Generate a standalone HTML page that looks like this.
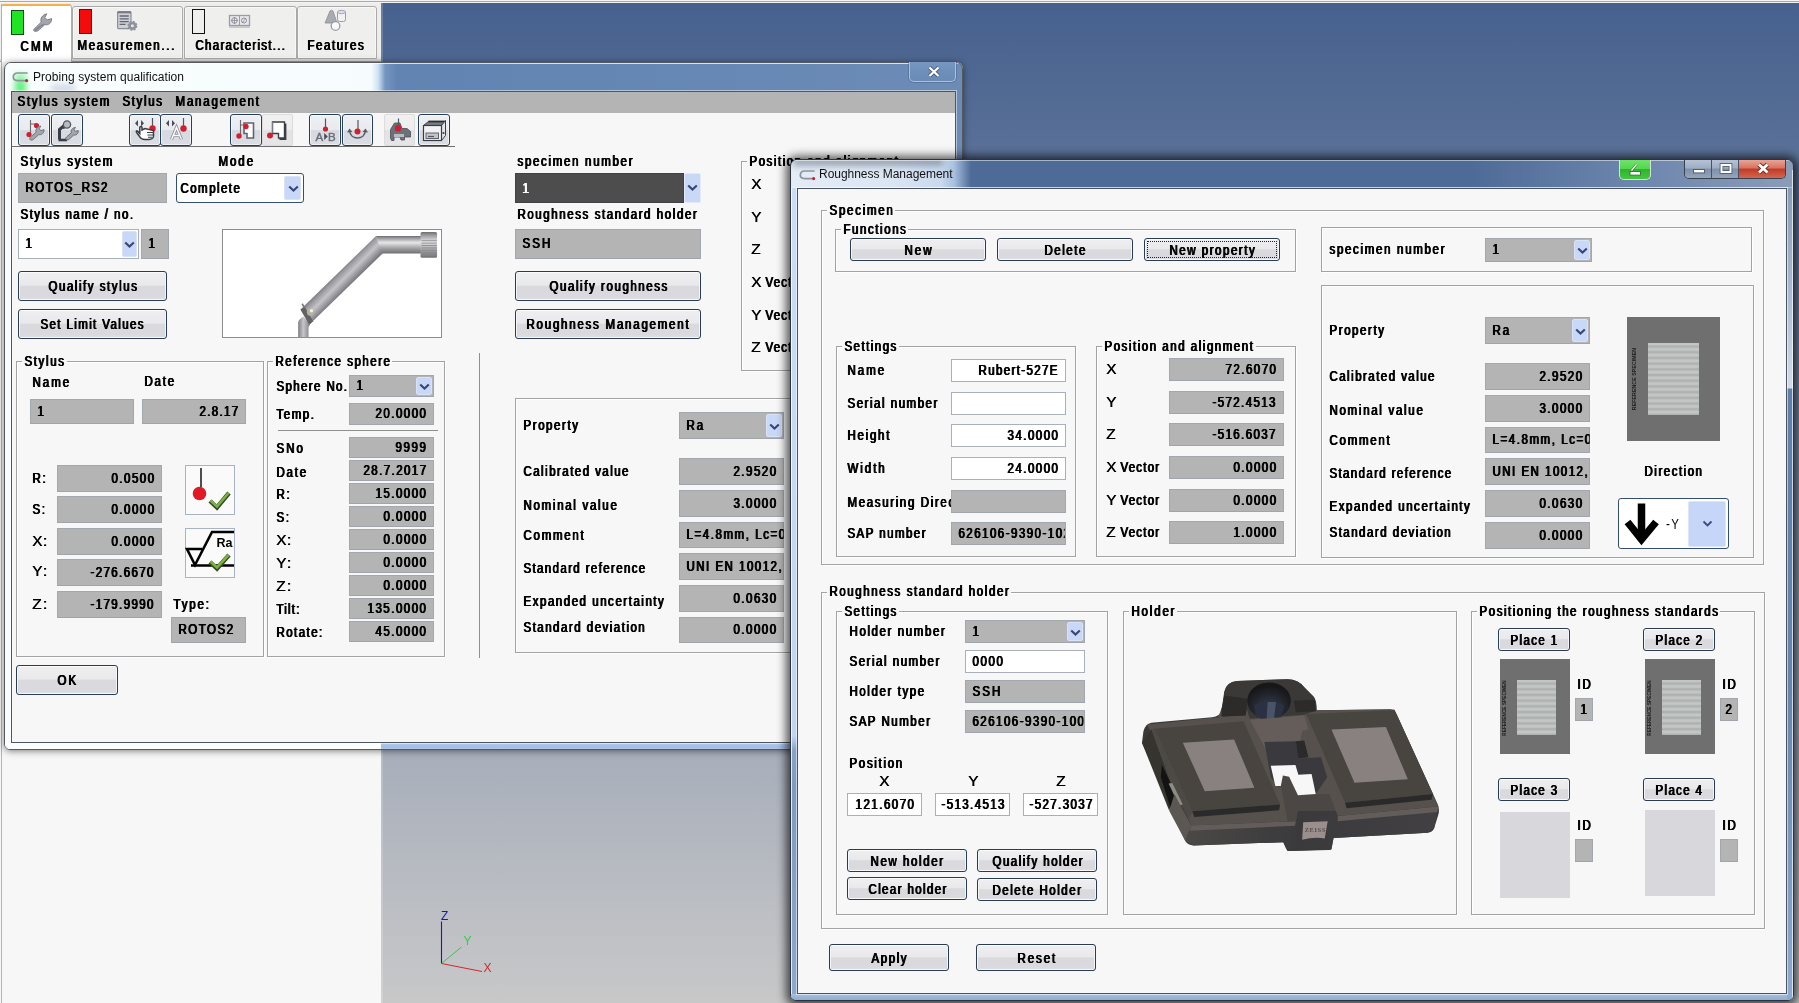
<!DOCTYPE html>
<html><head><meta charset="utf-8"><title>Roughness Management</title>
<style>
html,body{margin:0;padding:0}
body{width:1799px;height:1003px;overflow:hidden;position:relative;background:#f7f7f7;font:13px "Liberation Sans",sans-serif;color:#000}
div,svg{position:absolute;box-sizing:border-box}
#root{left:0;top:0;width:1799px;height:1003px;will-change:transform}
.t{font:14px/15px "Liberation Sans",sans-serif;white-space:nowrap;text-shadow:1.2px 0 0 #000,.6px 0 0 #000;color:#000;transform:scaleX(.82);transform-origin:0 0}
.tw{transform:scaleX(1.1);text-shadow:.4px 0 0 #000;letter-spacing:0}
.s{font:12px/15px "Liberation Sans",sans-serif;white-space:nowrap;color:#111}
.f{background:#b4b4b4;border:1px solid #a3a8af;border-bottom-color:#a0a5ac}
.w{background:#fff;border:1px solid #a9b0b8}
.d{background:#4d4d4d;border:1px solid #3f4246}
.cw{background:#fff;border:1px solid #34506f;border-radius:3px}
.dd{background:#c9d8f7;border:1px solid #d9e3f8;border-radius:2px}
.b{border:1px solid #293c52;border-radius:3px;background:linear-gradient(#efeff2 0,#e9e9ec 47%,#dadade 51%,#d9d9de 85%,#dddde2 100%);box-shadow:inset 0 0 0 1px rgba(255,255,255,.8),inset 2px 0 1px -1px rgba(170,200,235,.6),inset -2px 0 1px -1px rgba(170,200,235,.6)}
.fr{border:1px dotted #222}
.g{border:1px solid #a3a3a3;box-shadow:inset 1px 1px 0 #fff, 1px 1px 0 #fff}
.gl{background:#f7f7f7}
.cl{background:#f7f7f7}
</style></head>
<body>
<div id="root">
<div class="" style="left:0px;top:0px;width:1799px;height:3px;background:#f4f4f4"></div>
<div class="" style="left:0px;top:1px;width:1799px;height:1px;background:#a9a9a9"></div>
<div class="" style="left:381px;top:3px;width:1418px;height:1000px;background:linear-gradient(#46618e,#c8c8c9)"></div>
<div class="" style="left:381px;top:3px;width:2px;height:1000px;background:rgba(255,255,255,.18)"></div>
<div class="" style="left:0px;top:3px;width:381px;height:59px;background:#ededeb"></div>
<div class="" style="left:0px;top:59px;width:381px;height:3px;background:#d9d9d9;border-bottom:1px solid #9c9c9c"></div>
<div class="" style="left:1px;top:4px;width:1px;height:999px;background:#b4b4b4"></div>
<div class="" style="left:72px;top:6px;width:111px;height:53px;background:#efefed;border:1px solid #a9a9a9;border-radius:3px 3px 0 0;box-shadow:inset 0 0 0 1px #f8f8f8"></div>
<div class="" style="left:184px;top:6px;width:113px;height:53px;background:#efefed;border:1px solid #a9a9a9;border-radius:3px 3px 0 0;box-shadow:inset 0 0 0 1px #f8f8f8"></div>
<div class="" style="left:297px;top:6px;width:80px;height:53px;background:#efefed;border:1px solid #a9a9a9;border-radius:3px 3px 0 0;box-shadow:inset 0 0 0 1px #f8f8f8"></div>
<div class="" style="left:1px;top:4px;width:71px;height:58px;background:#fff;border:1px solid #b0b0b0;border-bottom:none;border-radius:4px 4px 0 0"></div>
<div class="" style="left:2px;top:4px;width:69px;height:2px;background:#f2b14c;border-radius:3px 3px 0 0"></div>
<div class="" style="left:11px;top:10px;width:13px;height:25px;background:#1fe424;border:1px solid #0f4a14"></div>
<div class="" style="left:79px;top:9px;width:13px;height:25px;background:#f40c0c;border:1px solid #6a0d0d"></div>
<div class="" style="left:192px;top:9px;width:13px;height:25px;border:1px solid #111"></div>
<svg style="left:32px;top:12px" width="22" height="21" viewBox="0 0 22 21">
<path d="M2 17.2 L9.2 10.2 C8 6.5 10 3 14.8 1.8 L12.8 5.4 L15.4 8 L19.6 6.6 C20 11.2 16 13.6 12.8 12.6 L7.4 17.6 C5.8 19.2 4 19.6 2.6 19.2 C1.4 18.8 1.2 17.8 2 17.2Z" fill="#a3a4ad" stroke="#7c7d88" stroke-width="1"/>
<path d="M3 18.6 L8 14.4 L12.4 12" fill="none" stroke="#82838e" stroke-width="1.4"/></svg>
<svg style="left:116px;top:10px" width="24" height="22" viewBox="0 0 24 22">
<rect x="1.6" y="1.6" width="13.4" height="17" rx="1" fill="#cfd1d7" stroke="#8b8e99" stroke-width="1.2"/>
<path d="M1.6 2.4h13.4" stroke="#777a86" stroke-width="1.8"/>
<path d="M3.6 6h9.2M3.6 8.8h9.2M3.6 11.6h9.2M3.6 14.4h6" stroke="#646773" stroke-width="1.3"/>
<circle cx="16.4" cy="15.8" r="4.1" fill="#8f929d" stroke="#8f929d" stroke-width="1.8" stroke-dasharray="1.8 1.4"/><circle cx="16.4" cy="15.8" r="1.5" fill="#e6e6ea"/></svg>
<svg style="left:228px;top:14px" width="24" height="14" viewBox="0 0 24 14">
<rect x="1.5" y="1.5" width="20" height="10" fill="#e8e8ec" stroke="#9a9ca6" stroke-width="1.3"/>
<path d="M11.5 1.5v10" stroke="#9a9ca6"/><circle cx="6.5" cy="6.5" r="2.8" fill="none" stroke="#8a8c96"/><path d="M3 6.5h7M6.5 3v7" stroke="#8a8c96" stroke-width=".8"/>
<circle cx="16" cy="6.5" r="2.5" fill="none" stroke="#8a8c96"/><path d="M14 9l4-5" stroke="#8a8c96" stroke-width=".8"/>
<path d="M1 13h21" stroke="#b8bac2" stroke-width="1.4"/></svg>
<svg style="left:323px;top:8px" width="26" height="25" viewBox="0 0 26 25">
<path d="M2 15 L7 3 C8 2 9 2 10 3 L14 15 Z" fill="#a9abb3" stroke="#8c8e97" stroke-width=".8"/>
<rect x="14.5" y="3" width="8" height="10.5" rx="2" fill="#f1f1f4" stroke="#9a9ca6"/>
<ellipse cx="18.5" cy="4" rx="4" ry="1.7" fill="#dcdde2" stroke="#9a9ca6" stroke-width=".8"/>
<circle cx="12.5" cy="18" r="4.3" fill="#fbfbfc" stroke="#9a9ca6" stroke-width="1.3"/></svg>
<div class="t" style="left:20.26px;top:39px;letter-spacing:2.70px;">CMM</div>
<div class="t" style="left:77.36px;top:38px;letter-spacing:2.06px;">Measuremen...</div>
<div class="t" style="left:194.72px;top:38px;letter-spacing:1.57px;">Characterist...</div>
<div class="t" style="left:307.36px;top:38px;letter-spacing:1.89px;">Features</div>
<svg style="left:430px;top:900px" width="70" height="85" viewBox="430 900 70 85">
<path d="M441.5 921.5v42" stroke="#1818b4" stroke-width="1.1" fill="none"/>
<path d="M441.5 963.5L461.5 947" stroke="#3cc84c" stroke-width="1" fill="none"/>
<path d="M441.5 963.5L482 971.5" stroke="#d42828" stroke-width="1" fill="none"/>
<text x="441" y="919.5" font-family="Liberation Sans, sans-serif" font-size="12" fill="#1818b4">Z</text>
<text x="463.5" y="945" font-family="Liberation Sans, sans-serif" font-size="12" fill="#3cc84c">Y</text>
<text x="483.5" y="971.5" font-family="Liberation Sans, sans-serif" font-size="12" fill="#d42828">X</text>
</svg>
<div class="" style="left:4px;top:62px;width:959px;height:688px;border-radius:7px 7px 6px 6px;box-shadow:0 1px 7px 0 rgba(0,0,0,.5);background:#f8fbfd"></div>
<div class="" style="left:4px;top:62px;width:959px;height:688px;border-radius:7px 7px 6px 6px;border:1px solid #56595e;overflow:hidden;background:linear-gradient(to right,#f9fdfe 0,#f6fcfe 366px,#cfe3f3 373px,#7696c2 380px,#6284b2 392px,#6486b3 60%,#6c8cb6 100%)"><div style="left:0;top:0;width:957px;height:1px;background:rgba(255,255,255,.75)"></div><div style="left:0;top:679px;width:376px;height:8px;background:#fbfdfe"></div><div style="left:376px;top:679px;width:581px;height:8px;background:linear-gradient(#b8cfee,#a3bee6 60%,#b4cbec)"></div><div style="left:8px;top:9px;width:15px;height:22px;background:radial-gradient(ellipse at 50% 70%,rgba(40,235,80,.85),rgba(80,240,110,.45) 55%,rgba(120,240,140,0) 100%);filter:blur(2px)"></div><div style="left:46px;top:21px;width:24px;height:9px;background:rgba(150,170,200,.4);filter:blur(3px)"></div></div>
<svg style="left:12px;top:69px" width="18" height="14" viewBox="0 0 18 14">
<path d="M15 4H5.5C3 4 1.3 5.6 1.3 7.8S3 11.6 5.5 11.6H12.5" fill="none" stroke="#8e939a" stroke-width="1.7" stroke-linecap="round"/>
<circle cx="14.6" cy="11.6" r="1.6" fill="#b02a2a"/></svg>
<div class="s" style="left:33px;top:70px;letter-spacing:.06px">Probing system qualification</div>
<div class="" style="left:909px;top:62px;width:47px;height:20px;border:1px solid #a9c1e2;border-top:none;border-radius:0 0 5px 5px;background:linear-gradient(#7797c1 0,#6e8fba 50%,#6a8bb6 100%);box-shadow:0 0 0 1px rgba(60,80,110,.35)"><svg width="14" height="12" viewBox="0 0 14 12" style="left:17px;top:4px"><path d="M2.5 1.5L11.5 10M11.5 1.5L2.5 10" stroke="#4a5a74" stroke-width="3.8"/><path d="M2.5 1.5L11.5 10M11.5 1.5L2.5 10" stroke="#fff" stroke-width="2.3"/></svg></div>
<div class="" style="left:11px;top:91px;width:945px;height:652px;background:#f7f7f7;border:1px solid #50565e;box-shadow:0 0 0 1px rgba(255,255,255,.5)"></div>
<div class="" style="left:12px;top:92px;width:943px;height:21px;background:#b4b4b4"></div>
<div class="t" style="left:16.98px;top:94px;letter-spacing:2.13px;">Stylus system</div>
<div class="t" style="left:121.98px;top:94px;letter-spacing:1.99px;">Stylus</div>
<div class="t" style="left:174.56px;top:94px;letter-spacing:2.24px;">Management</div>
<div class="" style="left:12px;top:146px;width:443px;height:1px;background:#6e6e6e"></div>
<div class="" style="left:18px;top:114px;width:32px;height:32px;border:1px solid #24405e;border-radius:3px;background:linear-gradient(#eef0f3 0,#e8eaee 50%,#d6d9e0 52%,#dadde4 100%);box-shadow:inset 0 0 0 1px rgba(255,255,255,.6)"><svg width="30" height="30" viewBox="0 0 30 30"><path d="M11.5 5v14M11.5 9h6" stroke="#6a6c74" stroke-width="1.1" fill="none"/><circle cx="17.5" cy="10.5" r="2.6" fill="#d02030"/><circle cx="10" cy="19.5" r="2.6" fill="#d02030"/><path d="M11.5 22L17.2 17.2C16.2 14.2 18 11.6 21.8 11L20.2 13.8L22 15.6L25 14.6C25.4 18.2 22.4 20.2 19.8 19.6L15.4 23.6C13.8 25.2 12.2 25.4 11.2 24.8C10.4 24.2 10.6 22.8 11.5 22Z" fill="#a3a5ad" stroke="#74767f" stroke-width="1"/></svg></div>
<div class="" style="left:51px;top:114px;width:32px;height:32px;border:1px solid #24405e;border-radius:3px;background:linear-gradient(#eef0f3 0,#e8eaee 50%,#d6d9e0 52%,#dadde4 100%);box-shadow:inset 0 0 0 1px rgba(255,255,255,.6)"><svg width="30" height="30" viewBox="0 0 30 30"><path d="M7.5 24.5V14.5L11 11.5L13 13" fill="none" stroke="#3c3e46" stroke-width="3"/><path d="M6.5 25h8.5" stroke="#3c3e46" stroke-width="2.6"/><circle cx="15" cy="9.5" r="3.6" fill="#b9bbc2" stroke="#55575f" stroke-width="1.3"/><path d="M14.5 22L19.4 17.8C18.6 15.2 20 13 23.4 12.4L22 14.8L23.6 16.4L26.2 15.6C26.6 18.8 24 20.6 21.6 20L17.8 23.6C16.4 25 15 25.2 14.2 24.6C13.4 24 13.6 22.8 14.5 22Z" fill="#a3a5ad" stroke="#686a73" stroke-width="1"/></svg></div>
<div class="" style="left:129px;top:114px;width:32px;height:32px;border:1px solid #24405e;border-radius:3px;background:linear-gradient(#eef0f3 0,#e8eaee 50%,#d6d9e0 52%,#dadde4 100%);box-shadow:inset 0 0 0 1px rgba(255,255,255,.6)"><svg width="30" height="30" viewBox="0 0 30 30"><path d="M8 5l-3 3.2 3 3.2zM11 5l3 3.2-3 3.2z" fill="#4a4c54"/><path d="M22.5 3v9" stroke="#55575f" stroke-width="1.2"/><circle cx="22.5" cy="13.5" r="3.2" fill="#d02030"/><path d="M8 16.5C6.5 15 5.5 16.5 7 18L9.5 21.5C10.5 23.5 12 24.5 15 24.5H19C21.5 24.5 23.5 23 23.5 21V15.5L15 13.5L12 15V12.5C12 11 9.8 11 9.8 12.5V18.5Z" fill="#fff" stroke="#3a3c44" stroke-width="1.5"/><path d="M17 17.5h6M17.5 20h5.5M18 22.3h4" stroke="#3a3c44" stroke-width="1.1"/></svg></div>
<div class="" style="left:160px;top:114px;width:32px;height:32px;border:1px solid #24405e;border-radius:3px;background:linear-gradient(#eef0f3 0,#e8eaee 50%,#d6d9e0 52%,#dadde4 100%);box-shadow:inset 0 0 0 1px rgba(255,255,255,.6)"><svg width="30" height="30" viewBox="0 0 30 30"><path d="M8 5l-3 3.2 3 3.2zM11 5l3 3.2-3 3.2z" fill="#4a4c54"/><path d="M22.5 3v9" stroke="#55575f" stroke-width="1.2"/><circle cx="22.5" cy="13.5" r="3.2" fill="#d02030"/><path d="M10.5 24.5L15.5 12.5L20.5 24.5M12.5 20.5h6" fill="none" stroke="#8e9098" stroke-width="3.2"/><path d="M10.5 24.5L15.5 12.5L20.5 24.5M12.5 20.5h6" fill="none" stroke="#fafafa" stroke-width="1.5"/></svg></div>
<div class="" style="left:230px;top:114px;width:32px;height:32px;border:1px solid #24405e;border-radius:3px;background:linear-gradient(#eef0f3 0,#e8eaee 50%,#d6d9e0 52%,#dadde4 100%);box-shadow:inset 0 0 0 1px rgba(255,255,255,.6)"><svg width="30" height="30" viewBox="0 0 30 30"><path d="M9.5 5v15M9.5 10h6" stroke="#6a6c74" stroke-width="1.1" fill="none"/><path d="M13 8h9.5V23H16V18.5H13Z" fill="#fff" stroke="#62646c" stroke-width="1.6"/><circle cx="15" cy="11.5" r="2.7" fill="#d02030"/><circle cx="8" cy="21" r="2.7" fill="#d02030"/></svg></div>
<div class="" style="left:262px;top:114px;width:31px;height:32px;border:1px solid #dcdcdc;border-radius:2px;background:linear-gradient(#f1f1f1 0,#ededee 50%,#e2e2e4 52%,#e6e6e8 100%)"><svg width="30" height="30" viewBox="0 0 30 30"><path d="M9.5 7H21.5V23H15.5V18.5H9.5Z" fill="#fff" stroke="#3c3e46" stroke-width="1.4"/><path d="M22.5 8.5V24H16.5" fill="none" stroke="#3c3e46" stroke-width="1.8"/><path d="M9.5 7v11" stroke="#7a7c84" stroke-width="1"/><circle cx="7" cy="20.5" r="3" fill="#d02030"/></svg></div>
<div class="" style="left:309px;top:114px;width:32px;height:32px;border:1px solid #24405e;border-radius:3px;background:linear-gradient(#eef0f3 0,#e8eaee 50%,#d6d9e0 52%,#dadde4 100%);box-shadow:inset 0 0 0 1px rgba(255,255,255,.6)"><svg width="30" height="30" viewBox="0 0 30 30"><path d="M15.5 3.5v10" stroke="#55575f" stroke-width="1.2"/><circle cx="15.5" cy="14" r="2.6" fill="#d02030"/><text x="5.5" y="26" font-family="Liberation Sans,sans-serif" font-size="11.5" fill="#6a6c78" stroke="#6a6c78" stroke-width=".4">A</text><path d="M14.2 18l3.6 3.5-3.6 3.5z" fill="#4a4c58"/><text x="18" y="26" font-family="Liberation Sans,sans-serif" font-size="11.5" fill="#6a6c78" stroke="#6a6c78" stroke-width=".4">B</text></svg></div>
<div class="" style="left:342px;top:114px;width:31px;height:32px;border:1px solid #24405e;border-radius:3px;background:linear-gradient(#eef0f3 0,#e8eaee 50%,#d6d9e0 52%,#dadde4 100%);box-shadow:inset 0 0 0 1px rgba(255,255,255,.6)"><svg width="30" height="30" viewBox="0 0 30 30"><path d="M15 5v10" stroke="#55575f" stroke-width="1.2"/><circle cx="14.5" cy="16.5" r="3" fill="#d02030"/><path d="M6.5 15.5C7.5 25.5 21.5 25.5 22.5 15.5" fill="none" stroke="#5a5c6a" stroke-width="1.6"/><path d="M4 17.5l2.5-4 3 3.6zM25 17.5l-2.5-4-3 3.6z" fill="#5a5c6a"/></svg></div>
<div class="" style="left:384px;top:114px;width:31px;height:32px;border:1px solid #dcdcdc;border-radius:2px;background:linear-gradient(#f1f1f1 0,#ededee 50%,#e2e2e4 52%,#e6e6e8 100%)"><svg width="30" height="30" viewBox="0 0 30 30"><path d="M5.5 23V14.5L9.5 8H15L17 13.5H22L25.5 16.5V22H19.5V25H16L15 22H9V25.5H6.5Z" fill="#6e7079" stroke="#4a4c55" stroke-width=".8"/><path d="M9 22h10v-3H9z" fill="#b9bbc2"/><path d="M13.5 3.5v8" stroke="#55575f" stroke-width="1.2"/><rect x="10" y="10" width="6" height="6.5" rx="2" fill="#d02030"/></svg></div>
<div class="" style="left:418px;top:114px;width:32px;height:32px;border:1px solid #24405e;border-radius:3px;background:linear-gradient(#eef0f3 0,#e8eaee 50%,#d6d9e0 52%,#dadde4 100%);box-shadow:inset 0 0 0 1px rgba(255,255,255,.6)"><svg width="30" height="30" viewBox="0 0 30 30"><path d="M4.5 10.5L9.5 6.5H26.5L22.5 10.5Z" fill="#7a7c84" stroke="#3a3c44" stroke-width="1"/><path d="M9.5 6.5H26.5" stroke="#2c2e36" stroke-width="1.8"/><path d="M22.5 10.5L26.5 5.5V20.5L22.5 25.5Z" fill="#e4e5e8" stroke="#3a3c44" stroke-width="1"/><rect x="4.5" y="10.5" width="18" height="15" fill="#f2f2f4" stroke="#3a3c44" stroke-width="1.2"/><rect x="7" y="18" width="12.5" height="5.5" fill="#c2c4ca" stroke="#62646c" stroke-width="1"/><path d="M9 21.5h6" stroke="#55575f" stroke-width="1.2"/><circle cx="24.5" cy="18" r="1.1" fill="#3a3c44"/></svg></div>
<div class="t" style="left:19.98px;top:154px;letter-spacing:2.13px;">Stylus system</div>
<div class="t" style="left:217.56px;top:154px;letter-spacing:2.38px;">Mode</div>
<div class="f" style="left:18px;top:173px;width:149px;height:30px;"></div>
<div class="t" style="left:24.86px;top:180px;letter-spacing:1.90px;width:172.1px;overflow:hidden;">ROTOS_RS2</div>
<div class="cw" style="left:176px;top:173px;width:128px;height:30px;"></div>
<div class="t" style="left:180.42px;top:181px;letter-spacing:1.79px;">Complete</div>
<div class="dd" style="left:284px;top:176px;width:17px;height:24px"><svg width="11" height="8" viewBox="0 0 11 8" style="left:3px;top:8px"><path d="M1.2 1.4L5.5 5.6L9.8 1.4" fill="none" stroke="#36467a" stroke-width="2.1"/></svg></div>
<div class="t" style="left:20.18px;top:207px;letter-spacing:1.82px;">Stylus name / no.</div>
<div class="w" style="left:18px;top:229px;width:121px;height:30px;"></div>
<div class="t" style="left:24.93px;top:236px;letter-spacing:2.25px;">1</div>
<div class="dd" style="left:122px;top:231px;width:15px;height:26px"><svg width="11" height="8" viewBox="0 0 11 8" style="position:absolute;left:50%;top:50%;margin:-3px 0 0 -5.5px"><path d="M1.2 1.4 L5.5 5.6 L9.8 1.4" fill="none" stroke="#36467a" stroke-width="2.1"/></svg></div>
<div class="f" style="left:141px;top:229px;width:28px;height:30px;"></div>
<div class="t" style="left:147.93px;top:236px;letter-spacing:2.25px;width:24.5px;overflow:hidden;">1</div>
<div class="b" style="left:18px;top:271px;width:149px;height:30px;"></div>
<div class="t" style="left:48.01px;top:279px;letter-spacing:1.89px;">Qualify stylus</div>
<div class="b" style="left:18px;top:309px;width:149px;height:30px;"></div>
<div class="t" style="left:40.33px;top:317px;letter-spacing:1.70px;">Set Limit Values</div>
<div class="" style="left:222px;top:229px;width:220px;height:109px;background:#fff;border:1px solid #8c8c8c"></div>
<svg style="left:215px;top:222px" width="240" height="134" viewBox="0 0 1796 1003">
<defs><linearGradient id="tg" x1="0" y1="0" x2="0" y2="1"><stop offset="0" stop-color="#6e6e72"/><stop offset=".12" stop-color="#9a9a9e"/><stop offset=".38" stop-color="#e6e6e8"/><stop offset=".7" stop-color="#a2a2a6"/><stop offset="1" stop-color="#707074"/></linearGradient>
<linearGradient id="dg" gradientUnits="userSpaceOnUse" x1="900" y1="380" x2="1010" y2="490"><stop offset="0" stop-color="#6a6a6e"/><stop offset=".2" stop-color="#98989c"/><stop offset=".5" stop-color="#c4c4c8"/><stop offset=".8" stop-color="#8e8e92"/><stop offset="1" stop-color="#6a6a6e"/></linearGradient>
<linearGradient id="vg" x1="0" y1="0" x2="1" y2="0"><stop offset="0" stop-color="#808084"/><stop offset=".45" stop-color="#c6c6ca"/><stop offset="1" stop-color="#808084"/></linearGradient></defs>
<path d="M622 860V760C622 735 640 722 662 708L710 770L700 785V860Z" fill="url(#vg)"/>
<path d="M640 655L1205 105L1255 235L705 770Z" fill="url(#dg)"/>
<path d="M1205 105H1545V235H1250Z" fill="url(#tg)"/>
<rect x="1538" y="75" width="124" height="193" rx="12" fill="url(#tg)"/>
<path d="M1545 140h115M1545 158h115M1545 176h115M1545 194h115M1545 212h115M1545 230h115M1545 248h115" stroke="#86868a" stroke-width="6"/>
<path d="M640 655L705 770L735 742L672 636Z" fill="#636366"/>
<path d="M652 612L668 640" stroke="#77777c" stroke-width="12"/>
<circle cx="714" cy="674" r="27" fill="#b5b3a0"/><circle cx="722" cy="664" r="13" fill="#f1f0e4"/>
</svg>
<div class="t" style="left:517.28px;top:154px;letter-spacing:2.07px;">specimen number</div>
<div class="d" style="left:515px;top:173px;width:169px;height:30px;"></div>
<div class="t" style="left:522.13px;top:181px;letter-spacing:2.25px;color:#fff;text-shadow:1.2px 0 0 #fff,.6px 0 0 #fff">1</div>
<div class="dd" style="left:684px;top:173px;width:17px;height:30px;border-color:#e2eafa"><svg width="11" height="8" viewBox="0 0 11 8" style="left:2px;top:10px"><path d="M1.2 1.4L5.5 5.6L9.8 1.4" fill="none" stroke="#36467a" stroke-width="2.1"/></svg></div>
<div class="t" style="left:516.56px;top:207px;letter-spacing:1.94px;">Roughness standard holder</div>
<div class="f" style="left:515px;top:229px;width:186px;height:30px;"></div>
<div class="t" style="left:522.28px;top:236px;letter-spacing:2.49px;width:216.7px;overflow:hidden;">SSH</div>
<div class="b" style="left:515px;top:271px;width:186px;height:30px;"></div>
<div class="t" style="left:548.81px;top:279px;letter-spacing:1.93px;">Qualify roughness</div>
<div class="b" style="left:515px;top:309px;width:186px;height:30px;"></div>
<div class="t" style="left:526.36px;top:317px;letter-spacing:2.17px;">Roughness Management</div>
<div class="g" style="left:741px;top:161px;width:219px;height:210px;"></div>
<div class="gl" style="left:747px;top:160px;width:153px;height:4px;"></div>
<div class="t" style="left:748.56px;top:154px;letter-spacing:1.87px;">Position and alignment</div>
<div class="t tw" style="left:751.45px;top:177px;">X</div>
<div class="t tw" style="left:751.46px;top:210px;">Y</div>
<div class="t tw" style="left:751.31px;top:242px;">Z</div>
<div class="t tw" style="left:751.45px;top:275px;">X</div>
<div class="t" style="left:765.05px;top:275px;letter-spacing:1.50px;">Vector</div>
<div class="t tw" style="left:751.46px;top:308px;">Y</div>
<div class="t" style="left:765.05px;top:308px;letter-spacing:1.50px;">Vector</div>
<div class="t tw" style="left:751.31px;top:340px;">Z</div>
<div class="t" style="left:765.05px;top:340px;letter-spacing:1.50px;">Vector</div>
<div class="" style="left:479px;top:353px;width:1px;height:305px;background:#8f8f8f"></div>
<div class="g" style="left:16px;top:361px;width:248px;height:296px;"></div>
<div class="gl" style="left:22px;top:360px;width:45px;height:4px;"></div>
<div class="t" style="left:23.98px;top:354px;letter-spacing:1.99px;">Stylus</div>
<div class="t" style="left:31.56px;top:375px;letter-spacing:2.46px;">Name</div>
<div class="t" style="left:143.56px;top:374px;letter-spacing:2.20px;">Date</div>
<div class="f" style="left:30px;top:399px;width:104px;height:25px;"></div>
<div class="t" style="left:36.93px;top:404px;letter-spacing:2.25px;width:117.2px;overflow:hidden;">1</div>
<div class="f" style="left:142px;top:399px;width:104px;height:25px;"></div>
<div class="t" style="left:198.62px;top:404px;letter-spacing:1.64px;">2.8.17</div>
<div class="t" style="left:31.56px;top:471px;letter-spacing:2.15px;">R:</div>
<div class="f" style="left:57px;top:465px;width:105px;height:27px;"></div>
<div class="t" style="left:110.63px;top:471px;letter-spacing:1.81px;">0.0500</div>
<div class="t" style="left:31.98px;top:502px;letter-spacing:2.10px;">S:</div>
<div class="f" style="left:57px;top:496px;width:105px;height:27px;"></div>
<div class="t" style="left:110.63px;top:502px;letter-spacing:1.81px;">0.0000</div>
<div class="t tw" style="left:32.15px;top:534px;">X</div>
<div class="t" style="left:43.05px;top:534px;letter-spacing:1.73px;">:</div>
<div class="f" style="left:57px;top:528px;width:105px;height:27px;"></div>
<div class="t" style="left:110.63px;top:534px;letter-spacing:1.81px;">0.0000</div>
<div class="t tw" style="left:32.16px;top:564px;">Y</div>
<div class="t" style="left:43.05px;top:564px;letter-spacing:1.73px;">:</div>
<div class="f" style="left:57px;top:559px;width:105px;height:27px;"></div>
<div class="t" style="left:90.16px;top:565px;letter-spacing:1.72px;">-276.6670</div>
<div class="t tw" style="left:32.01px;top:597px;">Z</div>
<div class="t" style="left:43.05px;top:597px;letter-spacing:1.73px;">:</div>
<div class="f" style="left:57px;top:591px;width:105px;height:27px;"></div>
<div class="t" style="left:90.16px;top:597px;letter-spacing:1.72px;">-179.9990</div>
<div class="" style="left:185px;top:465px;width:50px;height:50px;background:#fafafa;border:1px solid #a9b3c6"></div>
<svg style="left:185px;top:465px" width="50" height="50" viewBox="0 0 50 50">
<path d="M16 3v19" stroke="#222" stroke-width="1.6"/><circle cx="14.5" cy="28.5" r="6.8" fill="#e01a24"/>
<path d="M25 36l7 6.5L44 28" fill="none" stroke="#3a4a28" stroke-width="4.4"/><path d="M25.5 35.5l6.5 6L43.5 28" fill="none" stroke="#7cb342" stroke-width="2.6"/></svg>
<div class="" style="left:185px;top:528px;width:50px;height:50px;background:#fafafa;border:1px solid #a9b3c6"></div>
<svg style="left:185px;top:528px" width="50" height="50" viewBox="0 0 50 50">
<path d="M49 4H27L10 37L2 21H17" fill="none" stroke="#000" stroke-width="2.6"/><path d="M6 37.5H49" stroke="#000" stroke-width="2.6"/>
<text x="31.5" y="18.5" font-family="Liberation Sans,sans-serif" font-weight="bold" font-size="12.5" fill="#000">Ra</text>
<path d="M25 34l7 6.5L44 27" fill="none" stroke="#3a4a28" stroke-width="4.4"/><path d="M25.5 33.5l6.5 6L43.5 27" fill="none" stroke="#7cb342" stroke-width="2.6"/></svg>
<div class="t" style="left:173.04px;top:597px;letter-spacing:2.22px;">Type:</div>
<div class="f" style="left:171px;top:617px;width:75px;height:26px;"></div>
<div class="t" style="left:177.86px;top:622px;letter-spacing:1.86px;width:81.9px;overflow:hidden;">ROTOS2</div>
<div class="g" style="left:267px;top:361px;width:178px;height:296px;"></div>
<div class="gl" style="left:273px;top:360px;width:119px;height:4px;"></div>
<div class="t" style="left:274.56px;top:354px;letter-spacing:1.89px;">Reference sphere</div>
<div class="t" style="left:275.98px;top:379px;letter-spacing:1.69px;">Sphere No.</div>
<div class="f" style="left:349px;top:375px;width:85px;height:22px;"></div>
<div class="t" style="left:355.93px;top:378px;letter-spacing:2.25px;">1</div>
<div class="dd" style="left:416px;top:377px;width:16px;height:18px"><svg width="11" height="8" viewBox="0 0 11 8" style="position:absolute;left:50%;top:50%;margin:-3px 0 0 -5.5px"><path d="M1.2 1.4 L5.5 5.6 L9.8 1.4" fill="none" stroke="#36467a" stroke-width="2.1"/></svg></div>
<div class="t" style="left:276.24px;top:407px;letter-spacing:1.88px;">Temp.</div>
<div class="f" style="left:349px;top:403px;width:85px;height:22px;"></div>
<div class="t" style="left:374.65px;top:406px;letter-spacing:1.83px;">20.0000</div>
<div class="" style="left:278px;top:430px;width:160px;height:1px;background:#8f8f8f"></div>
<div class="t" style="left:275.98px;top:441px;letter-spacing:2.42px;">SNo</div>
<div class="f" style="left:349px;top:437px;width:85px;height:21px;"></div>
<div class="t" style="left:394.86px;top:440px;letter-spacing:1.97px;">9999</div>
<div class="t" style="left:275.56px;top:465px;letter-spacing:2.20px;">Date</div>
<div class="f" style="left:349px;top:460px;width:85px;height:21px;"></div>
<div class="t" style="left:362.71px;top:463px;letter-spacing:1.75px;">28.7.2017</div>
<div class="t" style="left:275.56px;top:487px;letter-spacing:2.15px;">R:</div>
<div class="f" style="left:349px;top:483px;width:85px;height:21px;"></div>
<div class="t" style="left:374.65px;top:486px;letter-spacing:1.83px;">15.0000</div>
<div class="t" style="left:275.98px;top:510px;letter-spacing:2.10px;">S:</div>
<div class="f" style="left:349px;top:506px;width:85px;height:21px;"></div>
<div class="t" style="left:382.63px;top:509px;letter-spacing:1.81px;">0.0000</div>
<div class="t tw" style="left:276.15px;top:533px;">X</div>
<div class="t" style="left:287.05px;top:533px;letter-spacing:1.73px;">:</div>
<div class="f" style="left:349px;top:529px;width:85px;height:21px;"></div>
<div class="t" style="left:382.63px;top:532px;letter-spacing:1.81px;">0.0000</div>
<div class="t tw" style="left:276.16px;top:556px;">Y</div>
<div class="t" style="left:287.05px;top:556px;letter-spacing:1.73px;">:</div>
<div class="f" style="left:349px;top:552px;width:85px;height:21px;"></div>
<div class="t" style="left:382.63px;top:555px;letter-spacing:1.81px;">0.0000</div>
<div class="t tw" style="left:276.01px;top:579px;">Z</div>
<div class="t" style="left:287.05px;top:579px;letter-spacing:1.73px;">:</div>
<div class="f" style="left:349px;top:575px;width:85px;height:21px;"></div>
<div class="t" style="left:382.63px;top:578px;letter-spacing:1.81px;">0.0000</div>
<div class="t" style="left:276.24px;top:602px;letter-spacing:1.47px;">Tilt:</div>
<div class="f" style="left:349px;top:598px;width:85px;height:21px;"></div>
<div class="t" style="left:366.66px;top:601px;letter-spacing:1.85px;">135.0000</div>
<div class="t" style="left:275.56px;top:625px;letter-spacing:1.78px;">Rotate:</div>
<div class="f" style="left:349px;top:621px;width:85px;height:21px;"></div>
<div class="t" style="left:374.65px;top:624px;letter-spacing:1.83px;">45.0000</div>
<div class="g" style="left:515px;top:398px;width:285px;height:255px;"></div>
<div class="t" style="left:522.56px;top:418px;letter-spacing:1.93px;">Property</div>
<div class="f" style="left:679px;top:412px;width:105px;height:27px;"></div>
<div class="t" style="left:685.86px;top:418px;letter-spacing:2.40px;">Ra</div>
<div class="dd" style="left:766px;top:414px;width:16px;height:23px"><svg width="11" height="8" viewBox="0 0 11 8" style="position:absolute;left:50%;top:50%;margin:-3px 0 0 -5.5px"><path d="M1.2 1.4 L5.5 5.6 L9.8 1.4" fill="none" stroke="#36467a" stroke-width="2.1"/></svg></div>
<div class="t" style="left:522.92px;top:464px;letter-spacing:1.79px;">Calibrated value</div>
<div class="f" style="left:679px;top:458px;width:105px;height:27px;"></div>
<div class="t" style="left:732.63px;top:464px;letter-spacing:1.81px;">2.9520</div>
<div class="t" style="left:522.56px;top:498px;letter-spacing:2.09px;">Nominal value</div>
<div class="f" style="left:679px;top:490px;width:105px;height:27px;"></div>
<div class="t" style="left:732.63px;top:496px;letter-spacing:1.81px;">3.0000</div>
<div class="t" style="left:522.92px;top:528px;letter-spacing:2.12px;">Comment</div>
<div class="f" style="left:679px;top:522px;width:105px;height:26px;"></div>
<div class="t" style="left:685.86px;top:527px;letter-spacing:1.93px;width:118.5px;overflow:hidden;">L=4.8mm, Lc=0.8</div>
<div class="t" style="left:522.98px;top:561px;letter-spacing:1.68px;">Standard reference</div>
<div class="f" style="left:679px;top:553px;width:105px;height:27px;"></div>
<div class="t" style="left:685.91px;top:559px;letter-spacing:1.82px;width:118.4px;overflow:hidden;">UNI EN 10012,</div>
<div class="t" style="left:522.56px;top:594px;letter-spacing:1.88px;">Expanded uncertainty</div>
<div class="f" style="left:679px;top:585px;width:105px;height:27px;"></div>
<div class="t" style="left:732.63px;top:591px;letter-spacing:1.81px;">0.0630</div>
<div class="t" style="left:522.98px;top:620px;letter-spacing:1.83px;">Standard deviation</div>
<div class="f" style="left:679px;top:617px;width:105px;height:26px;"></div>
<div class="t" style="left:732.63px;top:622px;letter-spacing:1.81px;">0.0000</div>
<div class="b" style="left:16px;top:665px;width:102px;height:30px;"></div>
<div class="t" style="left:57.25px;top:673px;letter-spacing:2.56px;">OK</div>
<div class="" style="left:790px;top:159px;width:1004px;height:842px;border-radius:7px 7px 6px 6px;box-shadow:0 1px 10px 4px rgba(0,0,0,.66)"></div>
<div class="" style="left:790px;top:159px;width:1004px;height:842px;border-radius:7px 7px 6px 6px;border:1px solid #2c3442;overflow:hidden;background:linear-gradient(to right,#4e6b97 0,#4e6b97 680px,#6f88ae 860px,#8a9cb8 1000px)"><div style="left:0;top:0;width:180px;height:29px;background:linear-gradient(to right,#e4ecf6 0,#dbe6f3 100px,#c9d9ee 150px,#a9c0e0 163px,rgba(120,150,195,0) 180px)"></div><div style="left:2px;top:-3px;width:150px;height:9px;background:rgba(90,100,115,.5);filter:blur(3px)"></div><div style="left:0;top:0;width:1002px;height:1px;background:rgba(255,255,255,.5)"></div><div style="left:0;top:27px;width:1002px;height:1px;background:rgba(255,255,255,.35)"></div><div style="left:0;top:28px;width:7px;height:813px;background:linear-gradient(#cbddf4 0,#bfd5f1 548px,#86a4c8 562px,#7e9cc0 600px,#8da9cd 100%)"></div><div style="left:0;top:28px;width:1px;height:813px;background:rgba(255,255,255,.8)"></div><div style="left:0;top:834px;width:1002px;height:7px;background:linear-gradient(#a9c0de,#8da8cc)"></div><div style="left:996px;top:28px;width:6px;height:813px;background:linear-gradient(#8a9cb8 0,#a9b8ce 100px,#d2dbe7 200px,#5f80aa 201px,#6686b0 500px,#8eaad0 100%)"></div><div style="left:1001px;top:10px;width:1px;height:830px;background:rgba(255,255,255,.7)"></div></div>
<svg style="left:799px;top:167px" width="18" height="14" viewBox="0 0 18 14">
<path d="M15 4H5.5C3 4 1.3 5.6 1.3 7.8S3 11.6 5.5 11.6H12.5" fill="none" stroke="#8e939a" stroke-width="1.7" stroke-linecap="round"/>
<circle cx="14.6" cy="11.6" r="1.6" fill="#b02a2a"/></svg>
<div class="s" style="left:819px;top:167px;letter-spacing:-.03px">Roughness Management</div>
<div class="" style="left:1619px;top:160px;width:32px;height:20px;border:1px solid #cfe6cf;border-top:none;border-radius:0 0 5px 5px;background:linear-gradient(#6fe26a 0,#55d651 45%,#2fb42c 50%,#46c643 100%)"><svg width="30" height="19" viewBox="0 0 30 19"><path d="M11.5 10.5L16.5 4.5" stroke="#2a7a28" stroke-width="2.6"/><path d="M11.5 10.5L16.5 4.5" stroke="#fff" stroke-width="1.3"/><rect x="10" y="11.5" width="10.5" height="3.6" fill="#fff" stroke="#2a7a28" stroke-width=".9"/></svg></div>
<div class="" style="left:1684px;top:160px;width:102px;height:19px;border:1px solid #39424f;border-top:none;border-radius:0 0 5px 5px;overflow:hidden;background:#8a9db8"><div style="left:0;top:0;width:27px;height:18px;background:linear-gradient(#b7c3d4 0,#9dadc4 45%,#7e90ab 50%,#94a5bd 100%);border-right:1px solid #475264"></div><div style="left:27px;top:0;width:27px;height:18px;background:linear-gradient(#b7c3d4 0,#9dadc4 45%,#7e90ab 50%,#94a5bd 100%);border-right:1px solid #475264"></div><div style="left:54px;top:0;width:46px;height:18px;background:linear-gradient(#e9a596 0,#d8715f 45%,#c23a26 50%,#d4664f 100%)"></div><svg style="left:0;top:0" width="101" height="18" viewBox="0 0 101 18"><rect x="8.5" y="9.5" width="11" height="3.4" fill="#fff" stroke="#4a5468" stroke-width=".9"/><rect x="36.5" y="5" width="9" height="7" fill="none" stroke="#4a5468" stroke-width="3.6"/><rect x="36.5" y="5" width="9" height="7" fill="none" stroke="#fff" stroke-width="2"/><path d="M74 4.5L82.5 12.5M82.5 4.5L74 12.5" stroke="#6a2a20" stroke-width="4.6"/><path d="M74 4.5L82.5 12.5M82.5 4.5L74 12.5" stroke="#fff" stroke-width="2.9"/></svg></div>
<div class="" style="left:797px;top:188px;width:990px;height:806px;background:#f7f7f7;border:1px solid #4a5360;box-shadow:0 0 0 1px rgba(255,255,255,.55)"></div>
<div class="g" style="left:821px;top:210px;width:943px;height:355px;"></div>
<div class="gl" style="left:827px;top:209px;width:68px;height:4px;"></div>
<div class="t" style="left:828.98px;top:203px;letter-spacing:2.13px;">Specimen</div>
<div class="g" style="left:835px;top:229px;width:461px;height:43px;"></div>
<div class="gl" style="left:841px;top:228px;width:67px;height:4px;"></div>
<div class="t" style="left:842.56px;top:222px;letter-spacing:1.92px;">Functions</div>
<div class="b" style="left:850px;top:238px;width:136px;height:23px;"></div>
<div class="t" style="left:903.82px;top:243px;letter-spacing:2.46px;">New</div>
<div class="b" style="left:997px;top:238px;width:136px;height:23px;"></div>
<div class="t" style="left:1044.16px;top:243px;letter-spacing:1.87px;">Delete</div>
<div class="b" style="left:1144px;top:238px;width:136px;height:23px;"></div>
<div class="fr" style="left:1147px;top:241px;width:130px;height:17px;"></div>
<div class="t" style="left:1168.76px;top:243px;letter-spacing:1.87px;">New property</div>
<div class="g" style="left:1321px;top:227px;width:431px;height:45px;"></div>
<div class="t" style="left:1329.28px;top:242px;letter-spacing:2.07px;">specimen number</div>
<div class="f" style="left:1485px;top:238px;width:107px;height:24px;"></div>
<div class="t" style="left:1491.93px;top:242px;letter-spacing:2.25px;">1</div>
<div class="dd" style="left:1574px;top:240px;width:16px;height:20px"><svg width="11" height="8" viewBox="0 0 11 8" style="position:absolute;left:50%;top:50%;margin:-3px 0 0 -5.5px"><path d="M1.2 1.4 L5.5 5.6 L9.8 1.4" fill="none" stroke="#36467a" stroke-width="2.1"/></svg></div>
<div class="g" style="left:1321px;top:285px;width:433px;height:273px;"></div>
<div class="t" style="left:1328.56px;top:323px;letter-spacing:1.93px;">Property</div>
<div class="f" style="left:1485px;top:317px;width:105px;height:27px;"></div>
<div class="t" style="left:1491.86px;top:323px;letter-spacing:2.40px;">Ra</div>
<div class="dd" style="left:1572px;top:319px;width:16px;height:23px"><svg width="11" height="8" viewBox="0 0 11 8" style="position:absolute;left:50%;top:50%;margin:-3px 0 0 -5.5px"><path d="M1.2 1.4 L5.5 5.6 L9.8 1.4" fill="none" stroke="#36467a" stroke-width="2.1"/></svg></div>
<div class="t" style="left:1328.92px;top:369px;letter-spacing:1.79px;">Calibrated value</div>
<div class="f" style="left:1485px;top:363px;width:105px;height:27px;"></div>
<div class="t" style="left:1538.63px;top:369px;letter-spacing:1.81px;">2.9520</div>
<div class="t" style="left:1328.56px;top:403px;letter-spacing:2.09px;">Nominal value</div>
<div class="f" style="left:1485px;top:395px;width:105px;height:27px;"></div>
<div class="t" style="left:1538.63px;top:401px;letter-spacing:1.81px;">3.0000</div>
<div class="t" style="left:1328.92px;top:433px;letter-spacing:2.12px;">Comment</div>
<div class="f" style="left:1485px;top:427px;width:105px;height:26px;"></div>
<div class="t" style="left:1491.86px;top:432px;letter-spacing:1.93px;width:118.5px;overflow:hidden;">L=4.8mm, Lc=0.8</div>
<div class="t" style="left:1328.98px;top:466px;letter-spacing:1.68px;">Standard reference</div>
<div class="f" style="left:1485px;top:458px;width:105px;height:27px;"></div>
<div class="t" style="left:1491.91px;top:464px;letter-spacing:1.82px;width:118.4px;overflow:hidden;">UNI EN 10012,</div>
<div class="t" style="left:1328.56px;top:499px;letter-spacing:1.88px;">Expanded uncertainty</div>
<div class="f" style="left:1485px;top:490px;width:105px;height:27px;"></div>
<div class="t" style="left:1538.63px;top:496px;letter-spacing:1.81px;">0.0630</div>
<div class="t" style="left:1328.98px;top:525px;letter-spacing:1.83px;">Standard deviation</div>
<div class="f" style="left:1485px;top:522px;width:105px;height:27px;"></div>
<div class="t" style="left:1538.63px;top:528px;letter-spacing:1.81px;">0.0000</div>
<div class="" style="left:1627px;top:317px;width:93px;height:124px;background:#6f6f6f"></div>
<div class="" style="left:1648px;top:343px;width:51px;height:72px;background:repeating-linear-gradient(#c3c6c5 0,#c3c6c5 1.5px,#aeb2b1 3px,#aeb2b1 4px,#c3c6c5 5.7px)"></div>
<div style="left:1593.7px;top:375.0px;width:80px;height:8px;line-height:8px;text-align:center;font:bold 5.2px/8px 'Liberation Sans',sans-serif;color:#1c1c1c;transform:rotate(-90deg);white-space:nowrap;letter-spacing:.1px">REFERENCE SPECIMEN</div>
<div class="t" style="left:1643.86px;top:464px;letter-spacing:1.86px;">Direction</div>
<div class="cw" style="left:1618px;top:498px;width:111px;height:51px;"></div>
<div class="" style="left:1688px;top:501px;width:38px;height:46px;background:#c6d6f8;border:1px solid #dbe5fa;border-radius:2px"></div>
<svg style="left:1702px;top:520px" width="11" height="8" viewBox="0 0 11 8"><path d="M1.5 1.5L5.5 5.4L9.5 1.5" fill="none" stroke="#3c4c80" stroke-width="1.9"/></svg>
<svg style="left:1624px;top:502px" width="36" height="44" viewBox="0 0 36 44"><path d="M17.5 1.5V37" stroke="#000" stroke-width="7.5"/><path d="M3.5 20L17.5 37.5L32 20" fill="none" stroke="#000" stroke-width="7.4" stroke-linejoin="miter"/></svg>
<div style="left:1666px;top:517px;font:14px/15px 'Liberation Sans',sans-serif;letter-spacing:1.6px;transform:scaleX(.82);transform-origin:0 0">-Y</div>
<div class="g" style="left:836px;top:346px;width:240px;height:211px;"></div>
<div class="gl" style="left:842px;top:345px;width:57px;height:4px;"></div>
<div class="t" style="left:843.98px;top:339px;letter-spacing:1.79px;">Settings</div>
<div class="t" style="left:846.56px;top:363px;letter-spacing:2.46px;">Name</div>
<div class="w" style="left:951px;top:359px;width:115px;height:23px;"></div>
<div class="t" style="left:978.26px;top:363px;letter-spacing:1.69px;">Rubert-527E</div>
<div class="t" style="left:846.98px;top:396px;letter-spacing:1.87px;">Serial number</div>
<div class="w" style="left:951px;top:392px;width:115px;height:23px;"></div>
<div class="t" style="left:846.56px;top:428px;letter-spacing:2.11px;">Height</div>
<div class="w" style="left:951px;top:424px;width:115px;height:23px;"></div>
<div class="t" style="left:1006.65px;top:428px;letter-spacing:1.83px;">34.0000</div>
<div class="t" style="left:847.45px;top:461px;letter-spacing:2.39px;">Width</div>
<div class="w" style="left:951px;top:457px;width:115px;height:23px;"></div>
<div class="t" style="left:1006.65px;top:461px;letter-spacing:1.83px;">24.0000</div>
<div class="t" style="left:846.56px;top:495px;letter-spacing:2.01px;width:126.8px;overflow:hidden;">Measuring Direction</div>
<div class="f" style="left:951px;top:490px;width:115px;height:23px;"></div>
<div class="t" style="left:846.98px;top:526px;letter-spacing:1.78px;">SAP number</div>
<div class="f" style="left:951px;top:522px;width:115px;height:23px;"></div>
<div class="t" style="left:958.22px;top:526px;letter-spacing:1.81px;width:130.2px;overflow:hidden;">626106-9390-1020</div>
<div class="g" style="left:1096px;top:346px;width:200px;height:211px;"></div>
<div class="gl" style="left:1102px;top:345px;width:154px;height:4px;"></div>
<div class="t" style="left:1103.86px;top:339px;letter-spacing:1.87px;">Position and alignment</div>
<div class="t tw" style="left:1106.45px;top:362px;">X</div>
<div class="f" style="left:1169px;top:358px;width:115px;height:23px;"></div>
<div class="t" style="left:1224.65px;top:362px;letter-spacing:1.83px;">72.6070</div>
<div class="t tw" style="left:1106.46px;top:395px;">Y</div>
<div class="f" style="left:1169px;top:391px;width:115px;height:23px;"></div>
<div class="t" style="left:1212.22px;top:395px;letter-spacing:1.72px;">-572.4513</div>
<div class="t tw" style="left:1106.31px;top:427px;">Z</div>
<div class="f" style="left:1169px;top:423px;width:115px;height:23px;"></div>
<div class="t" style="left:1212.29px;top:427px;letter-spacing:1.72px;">-516.6037</div>
<div class="t tw" style="left:1106.45px;top:460px;">X</div>
<div class="t" style="left:1120.05px;top:460px;letter-spacing:1.50px;">Vector</div>
<div class="f" style="left:1169px;top:456px;width:115px;height:23px;"></div>
<div class="t" style="left:1232.63px;top:460px;letter-spacing:1.81px;">0.0000</div>
<div class="t tw" style="left:1106.46px;top:493px;">Y</div>
<div class="t" style="left:1120.05px;top:493px;letter-spacing:1.50px;">Vector</div>
<div class="f" style="left:1169px;top:489px;width:115px;height:23px;"></div>
<div class="t" style="left:1232.63px;top:493px;letter-spacing:1.81px;">0.0000</div>
<div class="t tw" style="left:1106.31px;top:525px;">Z</div>
<div class="t" style="left:1120.05px;top:525px;letter-spacing:1.50px;">Vector</div>
<div class="f" style="left:1169px;top:521px;width:115px;height:23px;"></div>
<div class="t" style="left:1232.63px;top:525px;letter-spacing:1.81px;">1.0000</div>
<div class="g" style="left:821px;top:592px;width:944px;height:337px;"></div>
<div class="gl" style="left:827px;top:591px;width:184px;height:4px;"></div>
<div class="t" style="left:828.56px;top:584px;letter-spacing:1.94px;">Roughness standard holder</div>
<div class="g" style="left:836px;top:611px;width:272px;height:304px;"></div>
<div class="gl" style="left:842px;top:610px;width:57px;height:4px;"></div>
<div class="t" style="left:843.98px;top:604px;letter-spacing:1.79px;">Settings</div>
<div class="t" style="left:848.56px;top:624px;letter-spacing:1.97px;">Holder number</div>
<div class="f" style="left:965px;top:620px;width:120px;height:23px;"></div>
<div class="t" style="left:971.93px;top:624px;letter-spacing:2.25px;">1</div>
<div class="dd" style="left:1067px;top:622px;width:16px;height:19px"><svg width="11" height="8" viewBox="0 0 11 8" style="position:absolute;left:50%;top:50%;margin:-3px 0 0 -5.5px"><path d="M1.2 1.4 L5.5 5.6 L9.8 1.4" fill="none" stroke="#36467a" stroke-width="2.1"/></svg></div>
<div class="t" style="left:848.98px;top:654px;letter-spacing:1.87px;">Serial number</div>
<div class="w" style="left:965px;top:650px;width:120px;height:23px;"></div>
<div class="t" style="left:972.35px;top:654px;letter-spacing:1.97px;width:136.2px;overflow:hidden;">0000</div>
<div class="t" style="left:848.56px;top:684px;letter-spacing:1.94px;">Holder type</div>
<div class="f" style="left:965px;top:680px;width:120px;height:23px;"></div>
<div class="t" style="left:972.28px;top:684px;letter-spacing:2.49px;width:136.2px;overflow:hidden;">SSH</div>
<div class="t" style="left:848.98px;top:714px;letter-spacing:1.86px;">SAP Number</div>
<div class="f" style="left:965px;top:710px;width:120px;height:23px;"></div>
<div class="t" style="left:972.22px;top:714px;letter-spacing:1.81px;width:136.3px;overflow:hidden;">626106-9390-1000</div>
<div class="t" style="left:848.56px;top:756px;letter-spacing:2.06px;">Position</div>
<div class="t tw" style="left:879.15px;top:774px;">X</div>
<div class="t tw" style="left:967.66px;top:774px;">Y</div>
<div class="t tw" style="left:1055.59px;top:774px;">Z</div>
<div class="w" style="left:847px;top:793px;width:75px;height:23px;"></div>
<div class="t" style="left:854.54px;top:797px;letter-spacing:1.85px;">121.6070</div>
<div class="w" style="left:935px;top:793px;width:75px;height:23px;"></div>
<div class="t" style="left:940.50px;top:797px;letter-spacing:1.72px;">-513.4513</div>
<div class="w" style="left:1023px;top:793px;width:75px;height:23px;"></div>
<div class="t" style="left:1028.54px;top:797px;letter-spacing:1.72px;">-527.3037</div>
<div class="b" style="left:847px;top:849px;width:120px;height:23px;"></div>
<div class="t" style="left:870.16px;top:854px;letter-spacing:1.96px;">New holder</div>
<div class="b" style="left:977px;top:849px;width:120px;height:23px;"></div>
<div class="t" style="left:991.56px;top:854px;letter-spacing:1.81px;">Qualify holder</div>
<div class="b" style="left:847px;top:877px;width:120px;height:23px;"></div>
<div class="t" style="left:867.72px;top:882px;letter-spacing:1.69px;">Clear holder</div>
<div class="b" style="left:977px;top:878px;width:120px;height:23px;"></div>
<div class="t" style="left:992.16px;top:883px;letter-spacing:1.86px;">Delete Holder</div>
<div class="g" style="left:1123px;top:611px;width:334px;height:304px;"></div>
<div class="gl" style="left:1129px;top:610px;width:48px;height:4px;"></div>
<div class="t" style="left:1130.56px;top:604px;letter-spacing:2.22px;">Holder</div>
<svg style="left:1120px;top:660px" width="340" height="210" viewBox="0 0 1624 1003">
<defs><linearGradient id="hb" x1="0" y1="0" x2="1" y2="0"><stop offset="0" stop-color="#4b4946"/><stop offset=".45" stop-color="#3a393c"/><stop offset="1" stop-color="#424043"/></linearGradient>
<radialGradient id="hh" cx=".5" cy=".7" r=".6"><stop offset="0" stop-color="#3a4150"/><stop offset=".6" stop-color="#23262e"/><stop offset="1" stop-color="#17171a"/></radialGradient></defs>
<path d="M105 395L112 340Q122 305 150 300L440 274Q478 270 485 240L498 150Q508 105 560 100L800 92Q850 92 880 130L925 175Q940 195 940 240L1290 235Q1312 236 1322 260L1518 690Q1528 715 1520 740L1500 805Q1492 823 1470 825L1020 850L1010 900Q1008 908 998 908L810 912Q798 912 793 900L780 870L350 886Q325 886 312 865Z" fill="#3a3938"/>
<path d="M130 308L470 274L490 215L600 215L620 280L880 262L940 240L1310 237L1520 700L1040 745L1030 720L850 720L840 770L340 790Z" fill="#57514d"/>
<path d="M500 150Q508 105 560 100L800 92Q850 92 880 130L925 175Q940 195 935 245L830 250L815 195L610 205L600 265L485 270Z" fill="#3b3937"/>
<path d="M485 240L498 170L610 185L600 265L485 270Z" fill="#2c2b2a"/>
<path d="M830 195L930 190L935 245L840 250Z" fill="#2c2b2a"/>
<ellipse cx="712" cy="195" rx="104" ry="88" fill="url(#hh)"/>
<path d="M640 215Q700 180 785 215L770 275Q700 300 650 270Z" fill="#2b3140"/>
<path d="M705 200L745 200L735 285L700 285Z" fill="#4a5468"/>
<path d="M165 328L590 292L765 690L345 722Z" fill="#48443f"/>
<path d="M345 722L765 690L760 718L355 750Z" fill="#2b2a2a"/>
<path d="M300 395L545 380L642 610L405 627Z" fill="#888180"/>
<path d="M890 258L1312 240L1495 640L1075 682Z" fill="#48443f"/>
<path d="M1075 682L1495 640L1488 668L1082 708Z" fill="#2b2a2a"/>
<path d="M1010 332L1270 320L1375 570L1120 586Z" fill="#888180"/>
<path d="M620 285L880 265L900 330L870 340L860 390L690 395L720 470Z" fill="#645d59"/>
<path d="M690 392L840 388L850 470L960 465L990 560L935 640L850 645L810 560L775 550L760 610L720 560Z" fill="#3a3a3e"/>
<path d="M840 388L880 385L900 465L850 470Z" fill="#2a292b"/>
<path d="M105 395L150 330L260 640L235 720Z" fill="#35342f"/>
<path d="M150 330L165 328L345 722L330 760L260 640Z" fill="#4d4945"/>
<path d="M200 500L245 595L270 700L240 705L195 560Z" fill="#131313"/>
<path d="M232 590L250 588L300 690L282 695Z" fill="#8e8a84"/>
<path d="M312 865L340 790L840 770L850 720L1030 720L1040 745L1520 700L1500 805L1470 825L1020 850L1010 905L800 912L780 870L350 886Z" fill="url(#hb)"/>
<path d="M340 790L840 770L836 792L333 815Z" fill="#625d5a"/>
<path d="M1040 745L1520 700L1516 726L1040 770Z" fill="#625d5a"/>
<path d="M235 720L260 640L340 790L312 865Z" fill="#5b5853"/>
<path d="M760 555L808 552L850 645L1000 640L1040 745L1030 720L850 720L840 770L800 770Z" fill="#4a4745"/>
<path d="M720 505L838 502L852 548L915 545L935 640L850 646L822 588L808 558L778 552L768 602L742 602Z" fill="#f7f7f7"/>
<path d="M875 775L992 770L978 852Q925 845 870 858Z" fill="#9a8f8c"/>
<text x="882" y="822" font-family="Liberation Serif,serif" font-weight="bold" font-size="30" fill="#5a4f4c" textLength="100">ZEISS</text>
</svg>
<div class="g" style="left:1471px;top:611px;width:284px;height:304px;"></div>
<div class="gl" style="left:1477px;top:610px;width:243px;height:4px;"></div>
<div class="t" style="left:1478.56px;top:604px;letter-spacing:1.89px;">Positioning the roughness standards</div>
<div class="b" style="left:1498px;top:628px;width:72px;height:23px;"></div>
<div class="t" style="left:1510.31px;top:633px;letter-spacing:1.69px;">Place 1</div>
<div class="b" style="left:1643px;top:628px;width:72px;height:23px;"></div>
<div class="t" style="left:1655.31px;top:633px;letter-spacing:1.69px;">Place 2</div>
<div class="" style="left:1500px;top:659px;width:70px;height:95px;background:#6f6f6f"></div>
<div class="" style="left:1517px;top:680px;width:39px;height:55px;background:repeating-linear-gradient(#c3c6c5 0,#c3c6c5 1.5px,#aeb2b1 3px,#aeb2b1 4px,#c3c6c5 5.7px)"></div>
<div style="left:1465.4px;top:703.5px;width:80px;height:8px;line-height:8px;text-align:center;font:bold 4.6px/8px 'Liberation Sans',sans-serif;color:#1c1c1c;transform:rotate(-90deg);white-space:nowrap;letter-spacing:.1px">REFERENCE SPECIMEN</div>
<div class="" style="left:1645px;top:659px;width:70px;height:95px;background:#6f6f6f"></div>
<div class="" style="left:1662px;top:680px;width:39px;height:55px;background:repeating-linear-gradient(#c3c6c5 0,#c3c6c5 1.5px,#aeb2b1 3px,#aeb2b1 4px,#c3c6c5 5.7px)"></div>
<div style="left:1610.4px;top:703.5px;width:80px;height:8px;line-height:8px;text-align:center;font:bold 4.6px/8px 'Liberation Sans',sans-serif;color:#1c1c1c;transform:rotate(-90deg);white-space:nowrap;letter-spacing:.1px">REFERENCE SPECIMEN</div>
<div class="t" style="left:1577.24px;top:677px;letter-spacing:2.15px;">ID</div>
<div class="t" style="left:1722.24px;top:677px;letter-spacing:2.15px;">ID</div>
<div class="f" style="left:1575px;top:698px;width:18px;height:23px;"></div>
<div class="t" style="left:1580.15px;top:702px;letter-spacing:2.25px;">1</div>
<div class="f" style="left:1720px;top:698px;width:18px;height:23px;"></div>
<div class="t" style="left:1725.31px;top:702px;letter-spacing:2.25px;">2</div>
<div class="b" style="left:1498px;top:778px;width:72px;height:23px;"></div>
<div class="t" style="left:1510.31px;top:783px;letter-spacing:1.68px;">Place 3</div>
<div class="b" style="left:1643px;top:778px;width:72px;height:23px;"></div>
<div class="t" style="left:1655.31px;top:783px;letter-spacing:1.64px;">Place 4</div>
<div class="" style="left:1500px;top:812px;width:70px;height:86px;background:#d8d8dc"></div>
<div class="" style="left:1645px;top:810px;width:70px;height:86px;background:#d8d8dc"></div>
<div class="t" style="left:1577.24px;top:818px;letter-spacing:2.15px;">ID</div>
<div class="t" style="left:1722.24px;top:818px;letter-spacing:2.15px;">ID</div>
<div class="f" style="left:1575px;top:839px;width:18px;height:23px;"></div>
<div class="f" style="left:1720px;top:839px;width:18px;height:23px;"></div>
<div class="b" style="left:829px;top:944px;width:120px;height:27px;"></div>
<div class="t" style="left:871.28px;top:951px;letter-spacing:1.93px;">Apply</div>
<div class="b" style="left:976px;top:944px;width:120px;height:27px;"></div>
<div class="t" style="left:1016.51px;top:951px;letter-spacing:2.36px;">Reset</div>
</div>
</body></html>
